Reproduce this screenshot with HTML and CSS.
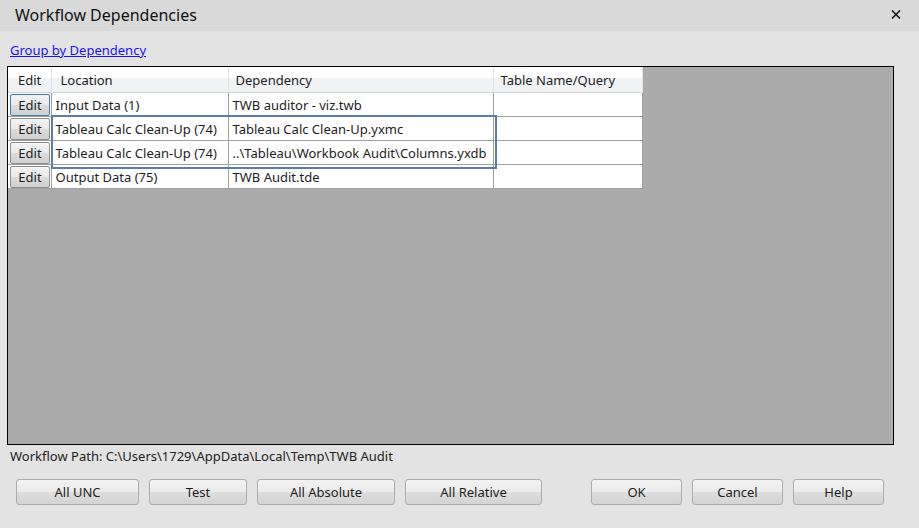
FILE: index.html
```html
<!DOCTYPE html>
<html lang="en">

<head>
    <meta charset="UTF-8">
    <title>Workflow Dependencies</title>
    <link rel="stylesheet" href="styles.css">
</head>

<body>
    <div id="dialog">
        <div id="titleBar">
            <span id="titleText">Workflow Dependencies</span>
            <svg id="closeIcon" width="10" height="9" viewBox="0 0 10 9">
                <path d="M1 0.5 L9 8.5 M9 0.5 L1 8.5" stroke="#1a1a1a" stroke-width="1.6" fill="none" />
            </svg>
        </div>

        <div id="content">
            <a href="#" id="groupLink">Group by Dependency</a>

            <div id="grid">
                <table id="depTable">
                    <colgroup>
                        <col class="colEdit">
                        <col class="colLoc">
                        <col class="colDep">
                        <col class="colTable">
                    </colgroup>
                    <tr class="headRow">
                        <th>Edit</th>
                        <th>Location</th>
                        <th>Dependency</th>
                        <th>Table Name/Query</th>
                    </tr>
                    <tr>
                        <td class="editCell"><button class="editBtn focused">Edit</button></td>
                        <td>Input Data (1)</td>
                        <td>TWB auditor - viz.twb</td>
                        <td></td>
                    </tr>
                    <tr>
                        <td class="editCell"><button class="editBtn">Edit</button></td>
                        <td>Tableau Calc Clean-Up (74)</td>
                        <td>Tableau Calc Clean-Up.yxmc</td>
                        <td></td>
                    </tr>
                    <tr>
                        <td class="editCell"><button class="editBtn">Edit</button></td>
                        <td>Tableau Calc Clean-Up (74)</td>
                        <td>..\Tableau\Workbook Audit\Columns.yxdb</td>
                        <td></td>
                    </tr>
                    <tr>
                        <td class="editCell"><button class="editBtn">Edit</button></td>
                        <td>Output Data (75)</td>
                        <td>TWB Audit.tde</td>
                        <td></td>
                    </tr>
                </table>
                <!-- selection frame drawn over rows 2 and 3 -->
                <div id="selection"></div>
            </div>

            <div id="pathLine">Workflow Path: C:\Users\1729\AppData\Local\Temp\TWB Audit</div>

            <div id="buttonRow">
                <div class="btnGroup">
                    <button class="dlgBtn w123">All UNC</button>
                    <button class="dlgBtn w98">Test</button>
                    <button class="dlgBtn w138">All Absolute</button>
                    <button class="dlgBtn w137">All Relative</button>
                </div>
                <div class="btnGroup">
                    <button class="dlgBtn w91">OK</button>
                    <button class="dlgBtn w91">Cancel</button>
                    <button class="dlgBtn w91">Help</button>
                </div>
            </div>
        </div>
    </div>
</body>

</html>
```

FILE: styles.css
```css
body {
    margin: 0;
    font-family: "Noto Sans", "Open Sans", sans-serif;
    font-size: 13px;
    color: #1e1e1e;
}

#dialog {
    width: 919px;
    height: 528px;
    background-color: #e3e3e3;
    display: flex;
    flex-direction: column;
}

#titleBar {
    height: 31px;
    background-color: #d9d9d9;
    display: flex;
    align-items: center;
    justify-content: space-between;
    padding: 0 18px 0 15px;
}

#titleText {
    font-size: 16px;
    color: #111;
    padding-bottom: 1px;
}

#closeIcon {
    margin-bottom: 2px;
}

#content {
    display: flex;
    flex-direction: column;
    padding: 0 25px 0 7px;
}

#groupLink {
    color: #1a12ff;
    margin: 10px 0 0 3px;
    height: 25px;
    line-height: 18px;
    align-self: flex-start;
}

#grid {
    position: relative;
    height: 377px;
    background-color: #ababab;
    border: 1px solid #000;
}

#depTable {
    border-collapse: collapse;
    table-layout: fixed;
    width: 634px;
    background-color: #fff;
}

.colEdit {
    width: 43px;
}

.colLoc {
    width: 177px;
}

.colDep {
    width: 265px;
}

.colTable {
    width: 149px;
}

#depTable th {
    height: 25px;
    padding: 0 0 0 7px;
    font-weight: normal;
    text-align: left;
    background: linear-gradient(#ffffff 0%, #ffffff 45%, #f1f2f4 46%, #f1f2f4 100%);
    border-right: 1px solid #e3e3e3;
    border-bottom: 1px solid #d5d5d5;
    white-space: nowrap;
}

#depTable th:first-child {
    padding-left: 10px;
}

#depTable th:nth-child(2) {
    padding-left: 9px;
}

#depTable td {
    height: 23px;
    padding: 0 0 0 4px;
    border: 1px solid #a0a0a0;
    white-space: nowrap;
    overflow: hidden;
}

#depTable tr td:first-child {
    border-left: none;
}

#depTable td.editCell {
    padding: 0 0 0 2px;
}

.editBtn {
    display: block;
    width: 40px;
    height: 22px;
    padding: 0;
    font-family: inherit;
    font-size: 13px;
    color: #1e1e1e;
    border: 1px solid #8e8f8f;
    border-radius: 2px;
    background: linear-gradient(#f2f2f2 0%, #ebebeb 48%, #dddddd 52%, #cfcfcf 100%);
}

.editBtn.focused {
    border-color: #3c7fb1;
}

#selection {
    position: absolute;
    left: 43px;
    top: 48px;
    width: 442px;
    height: 50px;
    border: 2px solid #5b7ea6;
}

#pathLine {
    height: 22px;
    line-height: 22px;
    margin-left: 3px;
    color: #222;
}

#buttonRow {
    display: flex;
    justify-content: space-between;
    margin: 12px 10px 0 9px;
}

.btnGroup {
    display: flex;
    gap: 10px;
}

.dlgBtn {
    height: 26px;
    padding: 0;
    font-family: inherit;
    font-size: 13px;
    color: #1e1e1e;
    border: 1px solid #acacac;
    border-radius: 3px;
    background: linear-gradient(#f2f2f2 0%, #ebebeb 48%, #dddddd 52%, #d4d4d4 100%);
}

.w123 { width: 123px; }
.w98 { width: 98px; }
.w138 { width: 138px; }
.w137 { width: 137px; }
.w91 { width: 91px; }
```
